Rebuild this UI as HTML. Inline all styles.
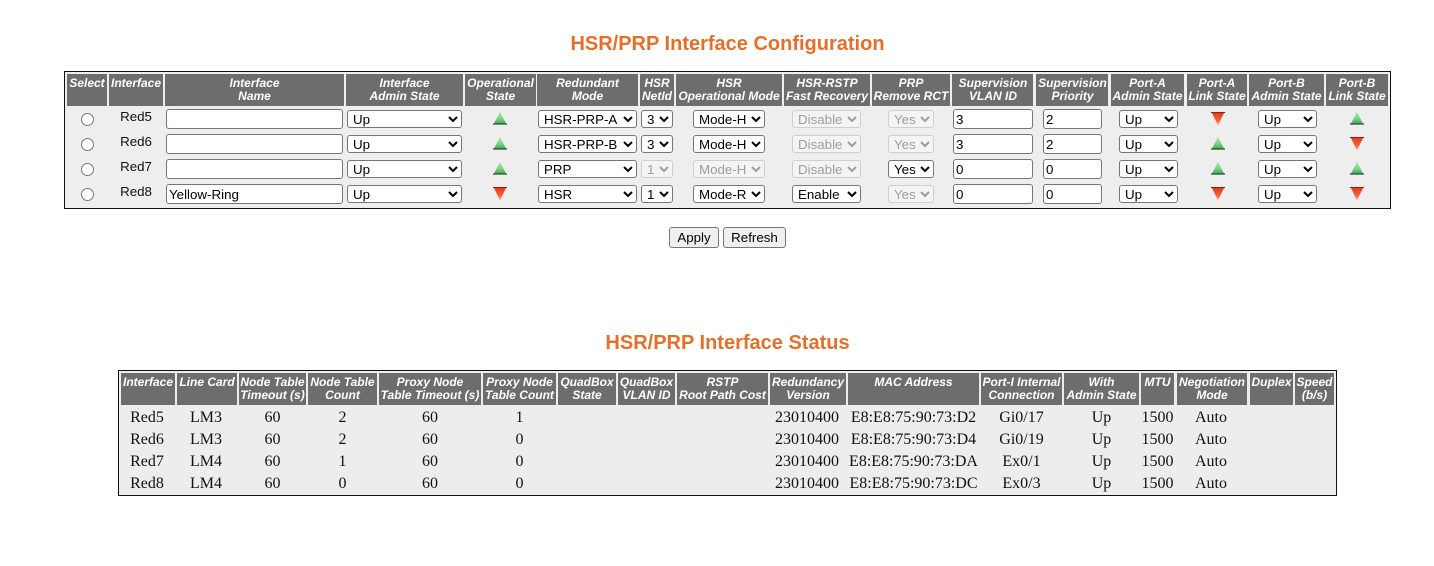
<!DOCTYPE html>
<html><head><meta charset="utf-8"><title>HSR/PRP Interface</title>
<style>
*{box-sizing:border-box}
html,body{margin:0;padding:0;background:#fff;width:1434px;height:566px;overflow:hidden;position:relative;font-family:"Liberation Sans",Arial,sans-serif}
h1{position:absolute;margin:0;left:0;width:1455px;text-align:center;font-size:20px;line-height:24px;font-weight:bold;color:#e36f2a}
.box{position:absolute;border:1px solid #111;background:#eeeeee}
#t2 .box{background:#eeecec}
.h{position:absolute;top:0;background:#6d6d6d;color:#fff;font:italic bold 12px/13px "Liberation Sans",Arial,sans-serif;text-align:center;padding-top:3px;white-space:nowrap;overflow:visible;height:32px}
#t1 .h{top:74px}
#t2 .h{top:373px;height:32px}
.r{position:absolute;left:0;width:1434px;height:20px}
.r input[type=text]{position:absolute;top:0;height:20px;border:1px solid #767676;border-radius:3px;padding:1px 2px;font:13.33px "Liberation Sans",Arial,sans-serif;background:#fff;color:#000;margin:0}
.r select{position:absolute;top:1px;height:18px;border:1px solid #767676;border-radius:3px;font:13.33px "Liberation Sans",Arial,sans-serif;background-color:#fff;color:#000;margin:0;padding:0 0 0 1px}
.r select:disabled{opacity:1;color:#9d9d9d;border-color:#cfcfcf;background-color:#f4f4f4}
.r input[type=radio]{position:absolute;left:81px;top:4px;width:13px;height:13px;margin:0}
.n{position:absolute;left:109px;width:54px;top:0;text-align:center;font:13.33px/16px "Liberation Sans",Arial,sans-serif;color:#111}
.s{position:absolute;left:0;width:1434px;height:22px;font:16px/22px "Liberation Serif","Times New Roman",serif;color:#111}
.s span{position:absolute;top:0;text-align:center;white-space:nowrap}
svg.t{position:absolute;top:2px;width:16px;height:15px}
button{position:absolute;top:227px;height:21px;border:1px solid #767676;border-radius:3px;background:#efefef;color:#000;font:13.33px "Liberation Sans",Arial,sans-serif;padding:0;margin:0}
</style></head>
<body>
<svg width="0" height="0" style="position:absolute"><defs>
<linearGradient id="gu" x1="0" y1="0" x2="0" y2="1"><stop offset="0" stop-color="#a8e8b0"/><stop offset=".6" stop-color="#78d086"/><stop offset="1" stop-color="#45ab55"/></linearGradient>
<linearGradient id="gd" x1="0" y1="0" x2="0" y2="1"><stop offset="0" stop-color="#e8391c"/><stop offset=".6" stop-color="#f2623c"/><stop offset="1" stop-color="#f9b090"/></linearGradient>
<symbol id="up" viewBox="0 0 16 15"><path d="M8 1L14 12.5H2Z" fill="url(#gu)"/><path d="M1 13H15" stroke="#1d4d24" stroke-width="1.2"/></symbol>
<symbol id="dn" viewBox="0 0 16 15"><path d="M2 2L14 2L8 14.5Z" fill="url(#gd)"/><path d="M1 1.5H15" stroke="#7a2a18" stroke-width="1.1"/></symbol>
</defs></svg>

<h1 style="top:32px">HSR/PRP Interface Configuration</h1>

<div id="t1">
<div class="box" style="left:64px;top:71px;width:1327px;height:138px"></div>
<div class="h" style="left:67px;width:40px">Select</div>
<div class="h" style="left:109px;width:54px">Interface</div>
<div class="h" style="left:165px;width:179px">Interface<br>Name</div>
<div class="h" style="left:346px;width:117px">Interface<br>Admin State</div>
<div class="h" style="left:465px;width:71px">Operational<br>State</div>
<div class="h" style="left:537px;width:101px">Redundant<br>Mode</div>
<div class="h" style="left:640px;width:34px">HSR<br>NetId</div>
<div class="h" style="left:676px;width:106px">HSR<br>Operational Mode</div>
<div class="h" style="left:784px;width:86px">HSR-RSTP<br>Fast Recovery</div>
<div class="h" style="left:872px;width:78px">PRP<br>Remove RCT</div>
<div class="h" style="left:952px;width:81px;padding-left:1px">Supervision<br>VLAN ID</div>
<div class="h" style="left:1036px;width:72px;padding-left:1px">Supervision<br>Priority</div>
<div class="h" style="left:1111px;width:73px">Port-A<br>Admin State</div>
<div class="h" style="left:1187px;width:60px">Port-A<br>Link State</div>
<div class="h" style="left:1249px;width:75px">Port-B<br>Admin State</div>
<div class="h" style="left:1326px;width:62px">Port-B<br>Link State</div>

<div class="r" style="top:109px">
<input type="radio" name="sel"><div class="n">Red5</div>
<input type="text" value="" style="left:166px;width:177px">
<select style="left:347px;width:115px"><option>Up</option></select>
<svg class="t" style="left:492px"><use href="#up"/></svg>
<select style="left:538px;width:99px"><option>HSR-PRP-A</option></select>
<select style="left:641px;width:32px"><option>3</option></select>
<select style="left:693px;width:72px"><option>Mode-H</option></select>
<select disabled style="left:792px;width:69px"><option>Disable</option></select>
<select disabled style="left:888px;width:46px"><option>Yes</option></select>
<input type="text" value="3" style="left:953px;width:80px">
<input type="text" value="2" style="left:1043px;width:59px">
<select style="left:1119px;width:59px"><option>Up</option></select>
<svg class="t" style="left:1210px"><use href="#dn"/></svg>
<select style="left:1258px;width:59px"><option>Up</option></select>
<svg class="t" style="left:1349px"><use href="#up"/></svg>
</div>

<div class="r" style="top:134px">
<input type="radio" name="sel"><div class="n">Red6</div>
<input type="text" value="" style="left:166px;width:177px">
<select style="left:347px;width:115px"><option>Up</option></select>
<svg class="t" style="left:492px"><use href="#up"/></svg>
<select style="left:538px;width:99px"><option>HSR-PRP-B</option></select>
<select style="left:641px;width:32px"><option>3</option></select>
<select style="left:693px;width:72px"><option>Mode-H</option></select>
<select disabled style="left:792px;width:69px"><option>Disable</option></select>
<select disabled style="left:888px;width:46px"><option>Yes</option></select>
<input type="text" value="3" style="left:953px;width:80px">
<input type="text" value="2" style="left:1043px;width:59px">
<select style="left:1119px;width:59px"><option>Up</option></select>
<svg class="t" style="left:1210px"><use href="#up"/></svg>
<select style="left:1258px;width:59px"><option>Up</option></select>
<svg class="t" style="left:1349px"><use href="#dn"/></svg>
</div>

<div class="r" style="top:159px">
<input type="radio" name="sel"><div class="n">Red7</div>
<input type="text" value="" style="left:166px;width:177px">
<select style="left:347px;width:115px"><option>Up</option></select>
<svg class="t" style="left:492px"><use href="#up"/></svg>
<select style="left:538px;width:99px"><option>PRP</option></select>
<select disabled style="left:641px;width:32px"><option>1</option></select>
<select disabled style="left:693px;width:72px"><option>Mode-H</option></select>
<select disabled style="left:792px;width:69px"><option>Disable</option></select>
<select style="left:888px;width:46px"><option>Yes</option></select>
<input type="text" value="0" style="left:953px;width:80px">
<input type="text" value="0" style="left:1043px;width:59px">
<select style="left:1119px;width:59px"><option>Up</option></select>
<svg class="t" style="left:1210px"><use href="#up"/></svg>
<select style="left:1258px;width:59px"><option>Up</option></select>
<svg class="t" style="left:1349px"><use href="#up"/></svg>
</div>

<div class="r" style="top:184px">
<input type="radio" name="sel"><div class="n">Red8</div>
<input type="text" value="Yellow-Ring" style="left:166px;width:177px">
<select style="left:347px;width:115px"><option>Up</option></select>
<svg class="t" style="left:492px"><use href="#dn"/></svg>
<select style="left:538px;width:99px"><option>HSR</option></select>
<select style="left:641px;width:32px"><option>1</option></select>
<select style="left:693px;width:72px"><option>Mode-R</option></select>
<select style="left:792px;width:69px"><option>Enable</option></select>
<select disabled style="left:888px;width:46px"><option>Yes</option></select>
<input type="text" value="0" style="left:953px;width:80px">
<input type="text" value="0" style="left:1043px;width:59px">
<select style="left:1119px;width:59px"><option>Up</option></select>
<svg class="t" style="left:1210px"><use href="#dn"/></svg>
<select style="left:1258px;width:59px"><option>Up</option></select>
<svg class="t" style="left:1349px"><use href="#dn"/></svg>
</div>
</div>

<button style="left:669px;width:50px">Apply</button>
<button style="left:723px;width:63px">Refresh</button>

<h1 style="top:331px">HSR/PRP Interface Status</h1>

<div id="t2">
<div class="box" style="left:118px;top:370px;width:1219px;height:126px"></div>
<div class="h" style="left:121px;width:54px">Interface</div>
<div class="h" style="left:177px;width:60px">Line Card</div>
<div class="h" style="left:239px;width:67px">Node Table<br>Timeout (s)</div>
<div class="h" style="left:308px;width:69px">Node Table<br>Count</div>
<div class="h" style="left:379px;width:102px">Proxy Node<br>Table Timeout (s)</div>
<div class="h" style="left:483px;width:73px">Proxy Node<br>Table Count</div>
<div class="h" style="left:558px;width:58px">QuadBox<br>State</div>
<div class="h" style="left:618px;width:57px">QuadBox<br>VLAN ID</div>
<div class="h" style="left:677px;width:91px">RSTP<br>Root Path Cost</div>
<div class="h" style="left:770px;width:76px">Redundancy<br>Version</div>
<div class="h" style="left:848px;width:131px">MAC Address</div>
<div class="h" style="left:981px;width:81px">Port-I Internal<br>Connection</div>
<div class="h" style="left:1064px;width:75px">With<br>Admin State</div>
<div class="h" style="left:1141px;width:33px">MTU</div>
<div class="h" style="left:1177px;width:70px">Negotiation<br>Mode</div>
<div class="h" style="left:1250px;width:43px">Duplex</div>
<div class="h" style="left:1295px;width:39px">Speed<br>(b/s)</div>

<div class="s" style="top:407px">
<span style="left:120px;width:54px">Red5</span><span style="left:176px;width:60px">LM3</span><span style="left:239px;width:67px">60</span><span style="left:308px;width:69px">2</span><span style="left:379px;width:102px">60</span><span style="left:483px;width:73px">1</span><span style="left:769px;width:76px">23010400</span><span style="left:848px;width:131px">E8:E8:75:90:73:D2</span><span style="left:981px;width:81px">Gi0/17</span><span style="left:1064px;width:75px">Up</span><span style="left:1141px;width:33px">1500</span><span style="left:1176px;width:70px">Auto</span>
</div>
<div class="s" style="top:429px">
<span style="left:120px;width:54px">Red6</span><span style="left:176px;width:60px">LM3</span><span style="left:239px;width:67px">60</span><span style="left:308px;width:69px">2</span><span style="left:379px;width:102px">60</span><span style="left:483px;width:73px">0</span><span style="left:769px;width:76px">23010400</span><span style="left:848px;width:131px">E8:E8:75:90:73:D4</span><span style="left:981px;width:81px">Gi0/19</span><span style="left:1064px;width:75px">Up</span><span style="left:1141px;width:33px">1500</span><span style="left:1176px;width:70px">Auto</span>
</div>
<div class="s" style="top:451px">
<span style="left:120px;width:54px">Red7</span><span style="left:176px;width:60px">LM4</span><span style="left:239px;width:67px">60</span><span style="left:308px;width:69px">1</span><span style="left:379px;width:102px">60</span><span style="left:483px;width:73px">0</span><span style="left:769px;width:76px">23010400</span><span style="left:848px;width:131px">E8:E8:75:90:73:DA</span><span style="left:981px;width:81px">Ex0/1</span><span style="left:1064px;width:75px">Up</span><span style="left:1141px;width:33px">1500</span><span style="left:1176px;width:70px">Auto</span>
</div>
<div class="s" style="top:473px">
<span style="left:120px;width:54px">Red8</span><span style="left:176px;width:60px">LM4</span><span style="left:239px;width:67px">60</span><span style="left:308px;width:69px">0</span><span style="left:379px;width:102px">60</span><span style="left:483px;width:73px">0</span><span style="left:769px;width:76px">23010400</span><span style="left:848px;width:131px">E8:E8:75:90:73:DC</span><span style="left:981px;width:81px">Ex0/3</span><span style="left:1064px;width:75px">Up</span><span style="left:1141px;width:33px">1500</span><span style="left:1176px;width:70px">Auto</span>
</div>
</div>
</body></html>
